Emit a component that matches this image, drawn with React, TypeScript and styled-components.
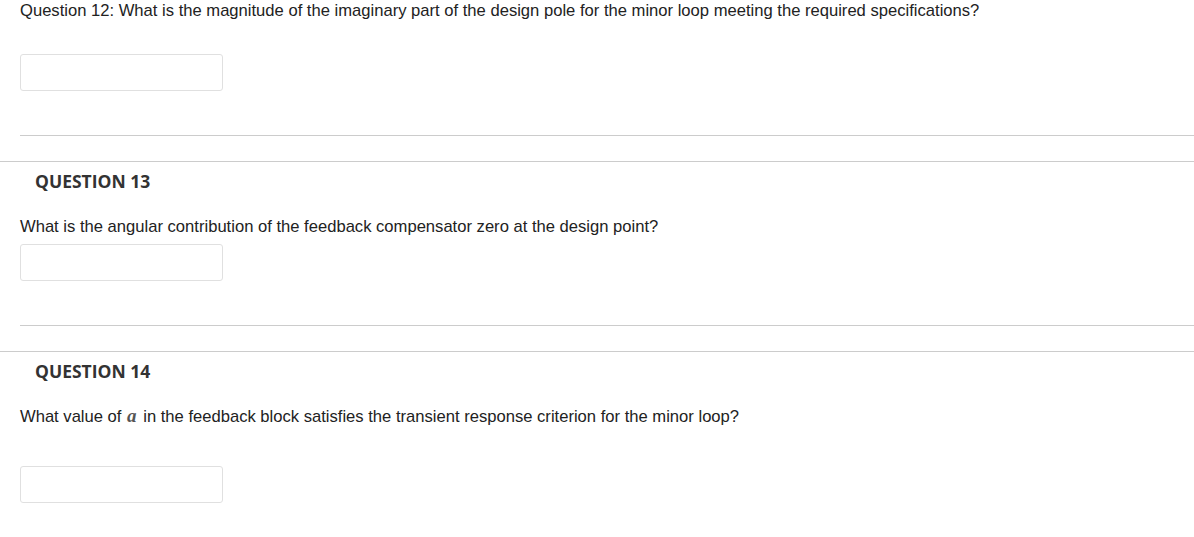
import React from "react";
import styled, { createGlobalStyle } from "styled-components";

const GlobalStyle = createGlobalStyle`
  html, body {
    margin: 0;
    padding: 0;
    background: #ffffff;
  }
  body {
    font-family: "Liberation Sans", Arial, sans-serif;
  }
`;

const Page = styled.div`
  display: flex;
  flex-direction: column;
  width: 100%;
`;

const Question = styled.section`
  display: flex;
  flex-direction: column;
`;

const Heading = styled.h3`
  margin: 7px 0 0 0;
  padding-left: 35px;
  font-family: "Open Sans", "Noto Sans", sans-serif;
  font-weight: 700;
  font-size: 17.5px;
  line-height: 24px;
  color: #333333;
`;

const Prompt = styled.p<{ $top: number }>`
  margin: ${(p) => p.$top}px 0 0 0;
  padding-left: 20px;
  font-family: "Liberation Sans", Arial, sans-serif;
  font-size: 16.6px;
  line-height: 22px;
  color: #222222;
`;

const MathVar = styled.span`
  font-family: "Liberation Serif", "Times New Roman", serif;
  font-style: italic;
  font-weight: 700;
  font-size: 19px;
  line-height: 0;
  color: #555555;
  padding: 0 2px 0 1px;
`;

const Answer = styled.input<{ $top: number }>`
  display: block;
  box-sizing: border-box;
  margin: ${(p) => p.$top}px 0 0 20px;
  width: 203px;
  height: 37px;
  border: 1px solid #e0e0e0;
  border-radius: 3px;
  background: #ffffff;
  outline: none;
  padding: 0 8px;
`;

const InnerRule = styled.hr`
  margin: 44px 0 0 20px;
  border: 0;
  border-top: 1px solid #cccccc;
  height: 0;
`;

const SectionRule = styled.hr`
  margin: 25px 0 0 0;
  border: 0;
  border-top: 1px solid #cccccc;
  height: 0;
`;

export default function App() {
  return (
    <>
      <GlobalStyle />
      <Page>
        <Question>
          <Prompt $top={0}>
            Question 12: What is the magnitude of the imaginary part of the design pole for the minor loop meeting the required specifications?
          </Prompt>
          <Answer $top={32} type="text" aria-label="Answer 12" />
          <InnerRule />
        </Question>
        <SectionRule />
        <Question>
          <Heading>QUESTION 13</Heading>
          <Prompt $top={23}>
            What is the angular contribution of the feedback compensator zero at the design point?
          </Prompt>
          <Answer $top={6} type="text" aria-label="Answer 13" />
          <InnerRule />
        </Question>
        <SectionRule />
        <Question>
          <Heading>QUESTION 14</Heading>
          <Prompt $top={23}>
            What value of <MathVar>a</MathVar> in the feedback block satisfies the transient response criterion for the minor loop?
          </Prompt>
          <Answer $top={38} type="text" aria-label="Answer 14" />
        </Question>
      </Page>
    </>
  );
}
